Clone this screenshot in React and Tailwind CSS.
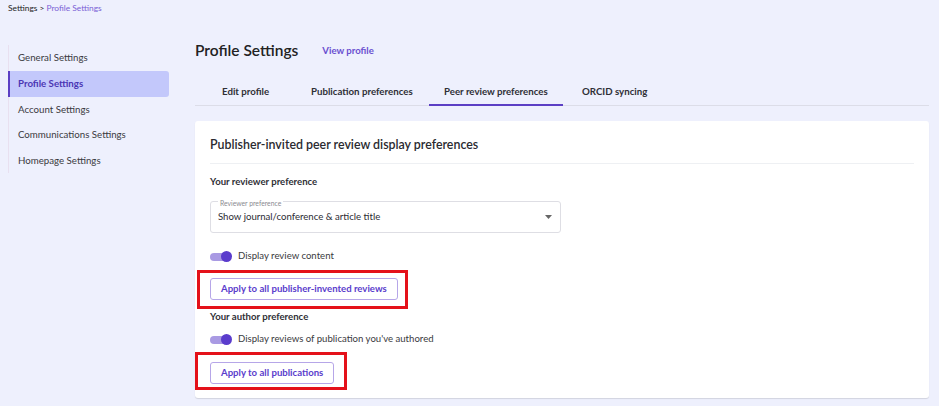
import React from "react";

function Toggle() {
  return (
    <div className="relative w-[23px] h-[13px] flex items-center">
      <div className="w-[21px] h-[8px] rounded-full bg-[#a99ae3]" />
      <div className="absolute left-[11px] top-[1px] w-[11px] h-[11px] rounded-full bg-[#5a3ccc]" />
    </div>
  );
}

export default function App() {
  const navItems = [
    "General Settings",
    "Profile Settings",
    "Account Settings",
    "Communications Settings",
    "Homepage Settings",
  ];
  return (
    <div
      className="w-[939px] h-[406px] bg-[#eef0fd] text-[#2b2b33] overflow-hidden"
      style={{ fontFamily: "Lato, 'Noto Sans', sans-serif" }}
    >
      <div className="pl-[8px] h-[16px] pt-[3px] text-[8.4px] leading-[11px]">
        <span className="text-[#222]">Settings &gt; </span>
        <span className="text-[#7a5fd6]">Profile Settings</span>
      </div>
      <div className="flex">
        <div className="w-[195px] shrink-0 pt-[29px] pl-[8px]">
          <div className="border-l border-[#e8e0f0] w-[161px]">
            {navItems.map((n, i) =>
              i === 1 ? (
                <div
                  key={n}
                  className="h-[26px] -ml-[1px] border-l-2 border-[#5b3fc4] bg-[#c3c8fb] rounded-r-[3px] pl-[8px] flex items-center text-[9.7px] font-bold text-[#4b36b4]"
                >
                  {n}
                </div>
              ) : (
                <div
                  key={n}
                  className="h-[25.5px] pl-[9px] flex items-center text-[9.7px] text-[#3a3a40]"
                >
                  {n}
                </div>
              )
            )}
          </div>
        </div>
        <div className="flex-1 pr-[10px]">
          <div className="flex items-center h-[20px] mt-[25px]">
            <div className="text-[15.5px] font-semibold text-[#222] leading-none">Profile Settings</div>
            <div className="ml-[24px] text-[9.6px] font-bold text-[#6a4fd0] leading-none">View profile</div>
          </div>
          <div className="mt-[17px] flex border-b border-[#dcdde8] h-[28px] text-[9.7px] font-bold text-[#2f2f36]">
            <div className="pl-[27px] w-[106px] flex items-center">Edit profile</div>
            <div className="pl-[10px] w-[128px] flex items-center">Publication preferences</div>
            <div className="pl-[15px] w-[134px] flex items-center border-b-2 border-[#5b3fc4] -mb-[1px]">Peer review preferences</div>
            <div className="pl-[19px] flex items-center">ORCID syncing</div>
          </div>
          <div className="mt-[15px] bg-white rounded-[3px] shadow-[0_1px_1px_rgba(0,0,0,0.12)] px-[15px] h-[277px]">
            <div className="h-[43px] flex items-center pt-[6px] border-b border-[#eef0f3] text-[12.4px] font-semibold text-[#2a2a30]">
              Publisher-invited peer review display preferences
            </div>
            <div className="mt-[12px] text-[9.6px] font-bold text-[#2f2f36] leading-[12px]">Your reviewer preference</div>
            <div className="mt-[13px] relative w-[351px] h-[32px] border border-[#dedee4] rounded-[3px] flex items-center px-[7px] pt-[1px]">
              <div className="absolute -top-[3px] left-[7px] bg-white px-[2px] text-[6.8px] leading-[8px] text-[#8a8a90]">Reviewer preference</div>
              <div className="text-[9.6px] text-[#2b2b33]">Show journal/conference &amp; article title</div>
              <svg className="absolute right-[8px] top-[13px]" width="7" height="4" viewBox="0 0 7 4">
                <path d="M0 0 L7 0 L3.5 4 Z" fill="#666" />
              </svg>
            </div>
            <div className="mt-[17px] flex items-center gap-[5px] h-[13px]">
              <Toggle />
              <div className="text-[9.6px] text-[#3a3a40]">Display review content</div>
            </div>
            <div className="mt-[7px] -ml-[13px] w-fit border-[3px] border-[#e4111a] pl-[10px] pr-[7px] pt-[5px] pb-[6px]">
              <div className="h-[22px] px-[10px] border border-[#b6a6e8] rounded-[3px] flex items-center text-[9.6px] font-bold text-[#5a3ccc]">
                Apply to all publisher-invented reviews
              </div>
            </div>
            <div className="mt-[2px] text-[9.6px] font-bold text-[#2f2f36] leading-[12px]">Your author preference</div>
            <div className="mt-[10px] flex items-center gap-[5px] h-[13px]">
              <Toggle />
              <div className="text-[9.6px] text-[#3a3a40]">Display reviews of publication you've authored</div>
            </div>
            <div className="mt-[6px] -ml-[15px] w-fit border-[3px] border-[#e4111a] pl-[12px] pr-[10px] pt-[7px] pb-[3px]">
              <div className="h-[22px] px-[10px] border border-[#b6a6e8] rounded-[3px] flex items-center text-[9.6px] font-bold text-[#5a3ccc]">
                Apply to all publications
              </div>
            </div>
          </div>
        </div>
      </div>
    </div>
  );
}
